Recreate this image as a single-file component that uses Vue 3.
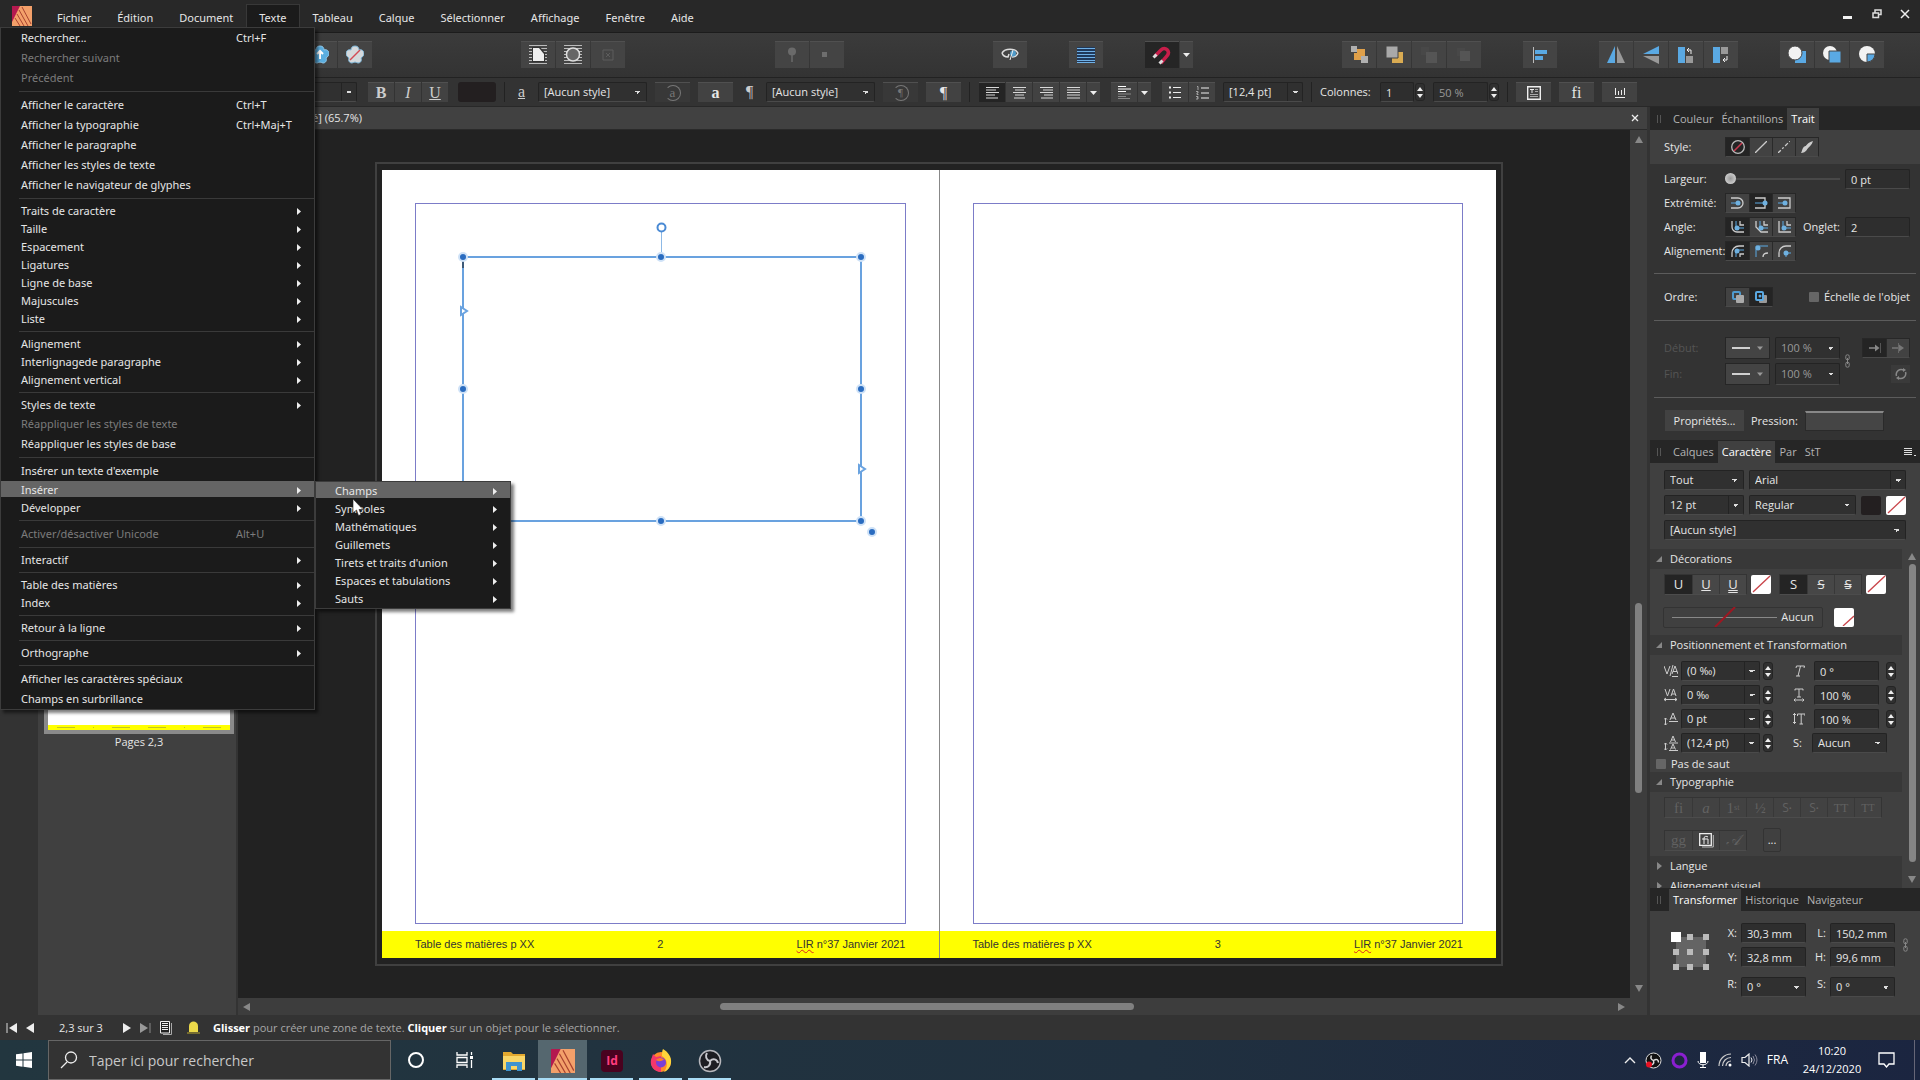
<template>
  <div class="app">
    <header class="menubar">
      <Icon name="logo" />
      <nav class="menus">
        <button v-for="m in menus" :key="m" class="menu-btn" :class="{ open: m === 'Texte' }">{{ m }}</button>
      </nav>
      <div class="win-btns">
        <button aria-label="Réduire"><Icon name="minimize" /></button>
        <button aria-label="Restaurer"><Icon name="restore" /></button>
        <button aria-label="Fermer"><Icon name="close" /></button>
      </div>
    </header>

    <div class="toolbar">
      <template v-for="(g, i) in toolGroups" :key="i">
        <span v-if="g.spread" class="stretch"></span>
        <div class="tool-group">
          <button v-for="b in g.items" :key="b" :class="{ narrow: b === 'caret', active: b === 'magnet' }" :aria-label="b">
            <Icon :name="b" />
          </button>
        </div>
      </template>
    </div>

    <div class="context">
      <select class="split font-field" aria-label="Police"><option>Arial</option></select>
      <div class="seg serif">
        <button><b>B</b></button>
        <button><i>I</i></button>
        <button><u>U</u></button>
      </div>
      <button class="ink" aria-label="Couleur du texte"></button>
      <span class="rule"></span>
      <span class="glyph under">a</span>
      <select class="style-field" aria-label="Style de caractère"><option>[Aucun style]</option></select>
      <button class="key dim"><span class="ring">a</span></button>
      <button class="key bold">a</button>
      <span class="glyph">¶</span>
      <select class="style-field" aria-label="Style de paragraphe"><option>[Aucun style]</option></select>
      <button class="key dim"><span class="ring small">¶</span></button>
      <button class="key">¶</button>
      <span class="rule"></span>
      <div class="seg aligns">
        <button class="on" aria-label="Gauche"><Icon name="alignLeft" /></button>
        <button aria-label="Centre"><Icon name="alignCenter" /></button>
        <button aria-label="Droite"><Icon name="alignRight" /></button>
        <button aria-label="Justifié"><Icon name="alignFull" /></button>
        <button class="narrow" aria-label="Plus"><Icon name="caret" /></button>
      </div>
      <div class="seg">
        <button aria-label="Alignement vertical"><Icon name="alignTop" /></button>
        <button class="narrow" aria-label="Plus"><Icon name="caret" /></button>
      </div>
      <div class="seg">
        <button aria-label="Puces"><Icon name="bullets" /></button>
        <button aria-label="Numéros"><Icon name="numbers" /></button>
      </div>
      <select class="split lead-field" aria-label="Interlignage"><option>[12,4 pt]</option></select>
      <span class="rule"></span>
      <label for="cols" class="cols-label">Colonnes:</label>
      <div class="stepper">
        <input id="cols" class="cols-field" value="1" />
        <button class="spin" aria-label="Colonnes +/-"><Icon name="spin" /></button>
      </div>
      <div class="stepper">
        <input class="gutter-field" value="50 %" disabled aria-label="Gouttière" />
        <button class="spin" aria-label="Gouttière +/-"><Icon name="spin" /></button>
      </div>
      <span class="rule"></span>
      <button class="key" aria-label="Cadre de texte"><Icon name="frameText" /></button>
      <button class="key">fi</button>
      <button class="key" aria-label="Ligne de base"><Icon name="baseline" /></button>
    </div>

    <main class="body">
      <section class="left">
        <div class="doc-tab">
          <span class="doc-name">é] (65.7%)</span>
          <button aria-label="Fermer le document"><Icon name="closeSmall" /></button>
        </div>
        <div class="work">
          <div class="tools"></div>
          <aside class="pages">
            <div class="thumb">
              <div class="thumb-foot"><i v-for="n in 6" :key="n"></i></div>
            </div>
            <span>Pages 2,3</span>
          </aside>
          <div class="view">
            <div class="view-row">
              <div class="canvas">
                <div class="spread">
                  <article v-for="p in [2, 3]" :key="p" class="page">
                    <div class="margins"></div>
                    <footer>
                      <span>Table des matières p XX</span>
                      <span>{{ p }}</span>
                      <span><em>LIR</em> n°37 Janvier 2021</span>
                    </footer>
                  </article>
                  <svg class="selection" width="520" height="390" viewBox="0 0 520 390">
                    <path d="M286.500 70V95" stroke="#8db9e6" />
                    <rect x="88" y="95" width="398" height="264" fill="none" stroke="#69a2df" stroke-width="2" />
                    <path d="M88 99v7" stroke="#111" />
                    <circle cx="286.500" cy="65.500" r="4" fill="#fff" stroke="#4a8ad4" stroke-width="2" />
                    <path v-for="t in [[86, 149], [484, 307]]" :key="t[0]" :d="`M${t[0]} ${t[1] - 4}v8l6-4z`" fill="#fff" stroke="#6aa3e0" stroke-width="2" />
                    <circle v-for="(h, i) in handles" :key="i" :cx="h[0]" :cy="h[1]" r="4" fill="#2a6cc0" stroke="#cfe2f7" stroke-width="2" />
                  </svg>
                </div>
              </div>
              <div class="vscroll">
                <Icon name="triUp" />
                <span class="vtrack"><span class="vthumb"></span></span>
                <Icon name="triDown" />
              </div>
            </div>
            <div class="hscroll">
              <Icon name="triLeft" />
              <span class="htrack"><span class="hthumb"></span></span>
              <Icon name="triRight" />
            </div>
          </div>
        </div>
      </section>

      <aside class="panels">
        <div class="tabs">
          <span class="grip"></span>
          <button>Couleur</button><button>Échantillons</button><button class="current">Trait</button>
        </div>
        <div class="stroke-panel">
          <div class="style-row line">
            <span class="lab">Style:</span>
            <div class="mini">
              <button class="on" aria-label="Aucun"><Icon name="none" /></button>
              <button aria-label="Plein"><Icon name="solid" /></button>
              <button aria-label="Tirets"><Icon name="dashed" /></button>
              <button aria-label="Pinceau"><Icon name="brush" /></button>
            </div>
          </div>
          <div class="rows">
            <div class="line">
              <label class="lab" for="width">Largeur:</label>
              <input type="range" value="0" class="slider" aria-label="Largeur du trait" />
              <input id="width" class="num push" value="0 pt" />
            </div>
            <div class="line">
              <span class="lab">Extrémité:</span>
              <div class="mini">
                <button aria-label="Ronde"><Icon name="capRound" /></button>
                <button class="on" aria-label="Plate"><Icon name="capButt" /></button>
                <button aria-label="Carrée"><Icon name="capSquare" /></button>
              </div>
            </div>
            <div class="line">
              <span class="lab">Angle:</span>
              <div class="mini">
                <button class="on" aria-label="Rond"><Icon name="joinRound" /></button>
                <button aria-label="Biseau"><Icon name="joinBevel" /></button>
                <button aria-label="Pointu"><Icon name="joinMiter" /></button>
              </div>
              <label class="push" for="miter">Onglet:</label>
              <input id="miter" class="num" value="2" />
            </div>
            <div class="line">
              <span class="lab">Alignement:</span>
              <div class="mini">
                <button class="on" aria-label="Centre"><Icon name="alCenter" /></button>
                <button aria-label="Intérieur"><Icon name="alIn" /></button>
                <button aria-label="Extérieur"><Icon name="alOut" /></button>
              </div>
            </div>
          </div>
          <hr />
          <div class="rows order">
            <div class="line">
              <span class="lab">Ordre:</span>
              <div class="mini">
                <button aria-label="Derrière"><Icon name="orderBack" /></button>
                <button class="on" aria-label="Devant"><Icon name="orderFront" /></button>
              </div>
              <label class="check push"><input type="checkbox" />Échelle de l'objet</label>
            </div>
          </div>
          <hr />
          <div class="rows ends">
            <div class="line">
              <span class="lab off">Début:</span>
              <button class="end-btn" aria-label="Début de ligne"><Icon name="endLine" /></button>
              <select class="end-size" aria-label="Taille début"><option>100 %</option></select>
              <Icon name="link" class="end-link" />
              <div class="mini push">
                <button class="on" aria-label="Dans la ligne"><Icon name="arrowA" /></button>
                <button aria-label="Hors de la ligne"><Icon name="arrowB" /></button>
              </div>
            </div>
            <div class="line">
              <span class="lab off">Fin:</span>
              <button class="end-btn" aria-label="Fin de ligne"><Icon name="endLine" /></button>
              <select class="end-size" aria-label="Taille fin"><option>100 %</option></select>
              <button class="swap push" aria-label="Permuter"><Icon name="swap" /></button>
            </div>
          </div>
          <hr />
          <div class="line pressure">
            <button class="props">Propriétés...</button>
            <span>Pression:</span>
            <button class="pressure-field" aria-label="Profil de pression"></button>
          </div>
        </div>

        <div class="tabs">
          <span class="grip"></span>
          <button>Calques</button><button class="current">Caractère</button><button>Par</button><button>StT</button>
          <button class="push burger" aria-label="Options"><Icon name="burger" /></button>
        </div>
        <div class="char-panel">
          <div class="char-top">
            <div class="line">
              <select class="w80" aria-label="Filtre"><option>Tout</option></select>
              <select class="split grow" aria-label="Famille"><option>Arial</option></select>
            </div>
            <div class="line">
              <select class="split w80" aria-label="Corps"><option>12 pt</option></select>
              <select class="grow" aria-label="Graisse"><option>Regular</option></select>
              <button class="swatch dark" aria-label="Couleur"></button>
              <button class="swatch" aria-label="Fond"><Icon name="noFill" /></button>
            </div>
            <div class="line">
              <select class="grow" aria-label="Style"><option>[Aucun style]</option></select>
            </div>
          </div>
          <div class="scroller">
            <div class="sections">
              <h3><Icon name="opened" />Décorations</h3>
              <div class="deco">
                <div class="seg2">
                  <button class="on">U</button>
                  <button><u>U</u></button>
                  <button><u class="double">U</u></button>
                </div>
                <button class="swatch" aria-label="Couleur soulignement"><Icon name="noFill" /></button>
                <div class="seg2 second">
                  <button class="on">S</button>
                  <button><s>S</s></button>
                  <button><s class="double">S</s></button>
                </div>
                <button class="swatch" aria-label="Couleur barré"><Icon name="noFill" /></button>
              </div>
              <div class="outline">
                <button class="outline-btn"><Icon name="noLine" />Aucun</button>
                <button class="swatch" aria-label="Couleur contour"><Icon name="halfFill" /></button>
              </div>
              <h3><Icon name="opened" />Positionnement et Transformation</h3>
              <div class="position">
                <div v-for="r in metrics" :key="r.icon" class="metric">
                  <Icon :name="r.icon" />
                  <select class="split" :aria-label="r.icon"><option>{{ r.value }}</option></select>
                  <button class="spin" aria-label="+/-"><Icon name="spin" /></button>
                  <span class="m-glyph"><Icon v-if="r.icon2" :name="r.icon2" /><span v-else>S:</span></span>
                  <input v-if="r.value2" :value="r.value2" :aria-label="r.icon2" />
                  <select v-else class="wide" aria-label="Position"><option>Aucun</option></select>
                  <button v-if="r.value2" class="spin push" aria-label="+/-"><Icon name="spin" /></button>
                </div>
              </div>
              <label class="check nobreak"><input type="checkbox" />Pas de saut</label>
              <h3><Icon name="opened" />Typographie</h3>
              <div class="typo">
                <div class="seg2 faded">
                  <button>fi</button>
                  <button><i>a</i></button>
                  <button>1<sup>st</sup></button>
                  <button>½</button>
                  <button class="sans">S<sup>•</sup></button>
                  <button class="sans">S<sub>•</sub></button>
                  <button class="caps">TT</button>
                  <button class="caps">T<small>T</small></button>
                </div>
                <div class="line">
                  <div class="seg2 faded">
                    <button>gg</button>
                    <button aria-label="Alternatives"><Icon name="alternates" /></button>
                    <button><i>𝒜</i></button>
                  </div>
                  <button class="more">...</button>
                </div>
              </div>
              <h3><Icon name="closed" />Langue</h3>
              <h3><Icon name="closed" />Alignement visuel</h3>
            </div>
            <div class="pscroll">
              <Icon name="triUp" />
              <span></span>
              <Icon name="triDown" />
            </div>
          </div>
        </div>

        <div class="tabs">
          <span class="grip"></span>
          <button class="current">Transformer</button><button>Historique</button><button>Navigateur</button>
        </div>
        <div class="transform">
          <Icon name="anchor" />
          <div class="fields">
            <template v-for="f in transform" :key="f[0]">
              <label :for="'t' + f[0]">{{ f[0] }}:</label>
              <input v-if="!f[2]" :id="'t' + f[0]" :value="f[1]" />
              <select v-else :id="'t' + f[0]"><option>{{ f[1] }}</option></select>
            </template>
          </div>
          <Icon name="link" />
        </div>
      </aside>
    </main>

    <footer class="status">
      <button aria-label="Première"><Icon name="first" /></button>
      <button aria-label="Précédente"><Icon name="prev" /></button>
      <span class="count">2,3 sur 3</span>
      <button aria-label="Suivante"><Icon name="next" /></button>
      <button aria-label="Dernière"><Icon name="last" /></button>
      <button aria-label="Pages"><Icon name="pagesIcon" /></button>
      <Icon name="bell" class="bell" />
      <p><b>Glisser</b> pour créer une zone de texte. <b>Cliquer</b> sur un objet pour le sélectionner.</p>
    </footer>

    <footer class="taskbar">
      <button class="start" aria-label="Démarrer"><Icon name="windows" /></button>
      <label class="search">
        <Icon name="search" />
        <input placeholder="Taper ici pour rechercher" />
      </label>
      <button v-for="t in tasks" :key="t.icon" class="task" :class="{ running: t.run, focus: t.focus }" :aria-label="t.icon">
        <Icon :name="t.icon" />
      </button>
      <div class="tray">
        <Icon v-for="t in ['chevron', 'obsSmall', 'ring', 'mic', 'wifi', 'sound']" :key="t" :name="t" />
        <span class="lang">FRA</span>
        <time>10:20<br />24/12/2020</time>
        <Icon name="notif" />
      </div>
    </footer>

    <!-- Menu Texte ouvert -->
    <div class="dropdown text-menu">
      <template v-for="(it, i) in textMenu" :key="i">
        <hr v-if="it === '-'" />
        <button v-else :class="{ sub: it.sub, off: it.off, hover: it.hover }">
          <span>{{ it.t }}</span>
          <kbd v-if="it.k">{{ it.k }}</kbd>
          <Icon v-if="it.sub" name="subArrow" />
        </button>
      </template>
    </div>
    <div class="dropdown insert-menu">
      <button v-for="(t, i) in insertMenu" :key="t" class="sub" :class="{ hover: i === 0 }">
        <span>{{ t }}</span>
        <Icon name="subArrow" />
      </button>
    </div>
    <Icon name="cursor" class="cursor" />
  </div>
</template>

<script setup>
import { h } from 'vue';

const menus = ['Fichier', 'Édition', 'Document', 'Texte', 'Tableau', 'Calque', 'Sélectionner', 'Affichage', 'Fenêtre', 'Aide'];

const toolGroups = [
  { items: ['flowerUp', 'flowerOff'] },
  { spread: true, items: ['wrapShape', 'wrapCircle', 'wrapOff'] },
  { spread: true, items: ['pin', 'dot'] },
  { spread: true, items: ['eye'] },
  { items: ['lines'] },
  { items: ['magnet', 'caret'] },
  { spread: true, items: ['toBack', 'backOne', 'frontOne', 'toFront'] },
  { items: ['alignTool'] },
  { items: ['flipH', 'flipV', 'rotL', 'rotR'] },
  { items: ['insBehind', 'insTop', 'insIn'] }
];

const handles = [[88, 95], [286, 95], [486, 95], [88, 227], [486, 227], [286, 359], [486, 359], [497, 370]];

const s = (t, o) => ({ t, sub: true, ...o });
const textMenu = [
  { t: 'Rechercher...', k: 'Ctrl+F' },
  { t: 'Rechercher suivant', off: true },
  { t: 'Précédent', off: true },
  '-',
  { t: 'Afficher le caractère', k: 'Ctrl+T' },
  { t: 'Afficher la typographie', k: 'Ctrl+Maj+T' },
  { t: 'Afficher le paragraphe' },
  { t: 'Afficher les styles de texte' },
  { t: 'Afficher le navigateur de glyphes' },
  '-',
  s('Traits de caractère'), s('Taille'), s('Espacement'), s('Ligatures'), s('Ligne de base'), s('Majuscules'), s('Liste'),
  '-',
  s('Alignement'), s('Interlignagede paragraphe'), s('Alignement vertical'),
  '-',
  s('Styles de texte'),
  { t: 'Réappliquer les styles de texte', off: true },
  { t: 'Réappliquer les styles de base' },
  '-',
  { t: "Insérer un texte d'exemple" },
  s('Insérer', { hover: true }),
  s('Développer'),
  '-',
  { t: 'Activer/désactiver Unicode', k: 'Alt+U', off: true },
  '-',
  s('Interactif'),
  '-',
  s('Table des matières'), s('Index'),
  '-',
  s('Retour à la ligne'),
  '-',
  s('Orthographe'),
  '-',
  { t: 'Afficher les caractères spéciaux' },
  { t: 'Champs en surbrillance' }
];
const insertMenu = ['Champs', 'Symboles', 'Mathématiques', 'Guillemets', "Tirets et traits d'union", 'Espaces et tabulations', 'Sauts'];

const metrics = [
  { icon: 'kern', value: '(0 ‰)', icon2: 'shear', value2: '0 °' },
  { icon: 'track', value: '0 ‰', icon2: 'scaleH', value2: '100 %' },
  { icon: 'shift', value: '0 pt', icon2: 'scaleV', value2: '100 %' },
  { icon: 'leading', value: '(12,4 pt)' }
];

const transform = [
  ['X', '30,3 mm'], ['L', '150,2 mm'],
  ['Y', '32,8 mm'], ['H', '99,6 mm'],
  ['R', '0 °', true], ['S', '0 °', true]
];

const tasks = [
  { icon: 'cortana' },
  { icon: 'taskview' },
  { icon: 'explorer', run: true },
  { icon: 'publisher', run: true, focus: true },
  { icon: 'indesign', run: true },
  { icon: 'firefox', run: true },
  { icon: 'obs', run: true }
];

// lignes horizontales d'une icône : [x1, x2, y]
const bars = (list, c = '#d8d8d8', w = 1) =>
  `<path stroke="${c}" stroke-width="${w}" d="${list.map(([a, b, y]) => `M${a} ${y}H${b}`).join('')}"/>`;
const wrapLines = bars([0, 3, 6, 9, 12, 15, 18].map((y) => [0, 18, y + 0.5]), '#bbb');
const flower = 'M9 1c3 0 4 2 4 4 3-1 5 1 5 4 0 2-2 3-3 4 1 2 0 5-3 5-1 0-2-1-3-1s-2 1-3 1c-3 0-4-3-3-5-1-1-3-2-3-4 0-3 2-5 5-4 0-2 1-4 4-4z';
const publisherArt = (w, hh) =>
  `<g transform="scale(${w / 20} ${hh / 20})"><rect width="20" height="20" fill="#f3a06a"/><path d="M0 0h8L0 16z" fill="#b3194f"/><path d="M7 4l9 16M5 8l7 12M3 12l5 8M10 1l9 17" stroke="#a8422f" stroke-width="1"/></g>`;
const node = (x, y) => `<circle cx="${x}" cy="${y}" r="2.5" fill="#6fb1e0"/>`;

const icons = {
  logo: [20, 20, publisherArt(20, 20)],
  minimize: [12, 12, '<path d="M1 9.5h9" stroke="#f2f2f2" stroke-width="3"/>'],
  restore: [10, 10, '<path d="M3 3.500V1h6v4.500H6.500M1 4h5.500v4.500H1z" fill="none" stroke="#ddd" stroke-width="1.500"/>'],
  close: [10, 10, '<path d="M1 1l8 8M9 1l-8 8" stroke="#eee" stroke-width="1.500"/>'],
  closeSmall: [8, 8, '<path d="M1 1l6 6M7 1l-6 6" stroke="#eee" stroke-width="1.300"/>'],
  flowerUp: [18, 19, `<path d="${flower}" fill="#5aaee0" stroke="#8fc9ec"/><path d="M9 14V6M6 9l3-3 3 3" stroke="#fff" stroke-width="2" fill="none"/>`],
  flowerOff: [18, 19, `<path d="${flower}" fill="#d5d9dc" stroke="#7fb9dc"/><path d="M4 15L14 5" stroke="#d34a55" stroke-width="1.500"/>`],
  wrapShape: [18, 19, wrapLines + '<path d="M3 2h8l5 6v9H3z" fill="#333"/><path d="M4 3h6l5 6v7H4z" fill="#eee"/>'],
  wrapCircle: [18, 19, wrapLines + '<circle cx="9" cy="9.500" r="6.500" fill="#666" stroke="#ddd" stroke-width="1.500"/>'],
  wrapOff: [12, 12, '<path d="M1 1h10v10H1zM4 4l4 4M8 4l-4 4" fill="none" stroke="#5c5c5c"/>'],
  pin: [10, 16, '<circle cx="5" cy="4.500" r="4" fill="#6a6a6a"/><path d="M5 8v7" stroke="#6a6a6a" stroke-width="1.500"/>'],
  dot: [10, 6, '<path d="M0 0h5v5H0z" fill="#6e6e6e"/>'],
  eye: [18, 14, '<path d="M1 5c3-5 13-5 16 0M1 5c1 3 3 4 6 4l1-3M17 5c-1 3-3 4-6 4" fill="none" stroke="#ddd" stroke-width="1.500"/><circle cx="12" cy="5.500" r="3" fill="#4f9bc9"/><path d="M12 2l-3 10" stroke="#eee"/>'],
  lines: [18, 16, '<path d="M0 0h18v16H0z" fill="#20395a"/>' + bars([1, 4, 7, 10, 13, 15].map((y) => [0, 18, y + 0.5]), '#6fb0e6')],
  magnet: [20, 20, '<path d="M3 11L9 5c4-4 10 1 6 6l-6 7" fill="none" stroke="#c81e4a" stroke-width="3.500"/><path d="M1.500 12.500l3-3M7.500 18.500l3-3" stroke="#ddd" stroke-width="3"/>'],
  caret: [7, 4, '<path d="M0 0h7L3.500 4z" fill="#eee"/>'],
  toBack: [17, 17, '<path d="M6 3h8v8h-3v3H3V7h3z" fill="#dfa04a"/><path d="M0 0h6v6H0zM10 10h7v7h-7z" fill="#b0b0b0"/>'],
  backOne: [17, 17, '<path d="M6 6h11v11H6z" fill="#d9ab52"/><path d="M0 0h12v12H0z" fill="#a9a9a9" stroke="#444"/>'],
  frontOne: [16, 16, '<path d="M0 0h8v8H0z" fill="#484848"/><path d="M5 5h11v11H5z" fill="#555"/>'],
  toFront: [14, 14, '<path d="M0 0h8v8H0z" fill="#484848"/><path d="M3 3h10v10H3z" fill="#555"/>'],
  alignTool: [15, 16, '<path d="M.5 0v16" stroke="#bbb"/><path d="M2 3h12v4H2zM2 9h8v4H2z" fill="#5aa9e3"/>'],
  flipH: [18, 17, '<path d="M8 0v17H0z" fill="#5aa9e3"/><path d="M10 0v17h8z" fill="#999"/>'],
  flipV: [16, 18, '<path d="M16 0v8H0z" fill="#5aa9e3"/><path d="M16 18v-8H0z" fill="#999"/>'],
  rotL: [16, 16, '<path d="M0 0h7v16H0z" fill="#5aa9e3"/><path d="M8 9h7v7H8z" fill="#999"/><path d="M9 3h4v4M11 1L9 3l2 2" fill="none" stroke="#eee"/>'],
  rotR: [16, 16, '<path d="M0 0h7v16H0z" fill="#5aa9e3"/><path d="M8 0h7v7H8z" fill="#999"/><path d="M14 9v4h-4M12 11l-2 2 2 2" fill="none" stroke="#eee"/>'],
  insBehind: [18, 17, '<path d="M7 5h11v12H7z" fill="#5aa9e3"/><circle cx="7" cy="7" r="7" fill="#f2f2f2" stroke="#444"/>'],
  insTop: [18, 17, '<circle cx="7" cy="7" r="7" fill="#f2f2f2"/><path d="M6 5h12v12H6z" fill="#5aa9e3" stroke="#444"/>'],
  insIn: [17, 17, '<circle cx="8" cy="8" r="8" fill="#f2f2f2"/><path d="M8 8h8a8 8 0 0 1-8 8z" fill="#5aa9e3" stroke="#444"/>'],
  alignLeft: [13, 12, bars([[0, 13, 0.5], [0, 10, 3], [0, 13, 5.5], [0, 9, 8], [0, 12, 11]])],
  alignCenter: [13, 12, bars([[0, 13, 0.5], [2, 11, 3], [0, 13, 5.5], [2, 11, 8], [1, 12, 11]])],
  alignRight: [13, 12, bars([[0, 13, 0.5], [3, 13, 3], [0, 13, 5.5], [4, 13, 8], [1, 13, 11]])],
  alignFull: [13, 12, bars([[0, 13, 0.5], [0, 13, 3], [0, 13, 5.5], [0, 13, 8], [0, 13, 11]])],
  alignTop: [13, 13, bars([[0, 8, 0.5], [0, 13, 3], [0, 8, 5.5]], '#fff') + bars([[0, 13, 8], [0, 8, 10.5], [0, 12, 12.5]], '#888')],
  bullets: [12, 13, bars([[4, 12, 1.5], [4, 12, 6.5], [4, 12, 11.5]], '#eee') + '<path d="M0 1.500h2M0 6.500h2M0 11.500h2" stroke="#eee" stroke-width="2"/>'],
  numbers: [13, 14, bars([[5, 13, 2], [5, 13, 7], [5, 13, 12]], '#eee') + '<path d="M1 .5h1V4M0 5.500h2v1.500H1v1.500h1.500M0 10.500h2V13H0M1 11.800h1" fill="none" stroke="#bbb" stroke-width=".8"/>'],
  spin: [6, 11, '<path d="M0 4h6L3 0zM0 7h6L3 11z" fill="#eee"/>'],
  frameText: [14, 14, '<path d="M.7.700h12.600v12.600H.7z" fill="none" stroke="#eee" stroke-width="1.400"/><path d="M3 3.500h4M5 3.500V7" stroke="#eee"/>' + bars([[8, 11, 3.5], [8, 11, 5.5], [3, 11, 8.5], [3, 11, 10.5]], '#aaa')],
  baseline: [10, 10, '<path d="M0 9.500h10M.5 0v7M3.500 3v4M6.500 2v5M9.500 0v7" stroke="#eee"/>'],
  triUp: [8, 8, '<path d="M0 7h8L4 0z" fill="#888"/>'],
  triDown: [8, 8, '<path d="M0 1h8L4 8z" fill="#888"/>'],
  triLeft: [8, 8, '<path d="M7 0v8L0 4z" fill="#888"/>'],
  triRight: [8, 8, '<path d="M1 0v8l7-4z" fill="#888"/>'],
  none: [14, 14, '<circle cx="7" cy="7" r="6.300" fill="none" stroke="#bbb" stroke-width="1.300"/><path d="M3 11l8-8" stroke="#c93a50" stroke-width="1.600"/>'],
  solid: [12, 12, '<path d="M0 12L12 0" stroke="#ccc" stroke-width="1.300"/>'],
  dashed: [12, 12, '<path d="M0 12L12 0" stroke="#ccc" stroke-width="1.300" stroke-dasharray="4 2 2 2"/>'],
  brush: [12, 12, '<path d="M12 0c-1 4-4 6-6 8l-2-2c2-3 4-5 8-6z" fill="#ccc"/><path d="M6 5c2 2-1 7-6 7 1-2 1-3 2-5 1-2 3-2 4-2z" fill="#ccc"/>'],
  capRound: [13, 12, '<path d="M0 1h7a5 5 0 0 1 0 10H0" fill="none" stroke="#ccc" stroke-width="1.300"/><path d="M0 6h7" stroke="#5aa9e3"/>' + node(7, 6)],
  capButt: [13, 12, '<path d="M0 1h10v10H0" fill="none" stroke="#ccc" stroke-width="1.300"/><path d="M0 6h10" stroke="#5aa9e3"/>' + node(10, 6)],
  capSquare: [13, 12, '<path d="M0 1h12v10H0" fill="none" stroke="#ccc" stroke-width="1.300"/><path d="M0 6h7" stroke="#5aa9e3"/>' + node(7, 6)],
  joinRound: [13, 12, '<path d="M1 0v6a5 5 0 0 0 5 5h7M9 0v4h4" fill="none" stroke="#ccc" stroke-width="1.300"/><path d="M5 0v7h8" fill="none" stroke="#5aa9e3"/>' + node(6, 7)],
  joinBevel: [13, 12, '<path d="M1 0v6l5 5h7M9 0v4h4" fill="none" stroke="#ccc" stroke-width="1.300"/><path d="M5 0v7h8" fill="none" stroke="#5aa9e3"/>' + node(6, 7)],
  joinMiter: [13, 12, '<path d="M1 0v11h12M9 0v4h4" fill="none" stroke="#ccc" stroke-width="1.300"/><path d="M5 0v7h8" fill="none" stroke="#5aa9e3"/>' + node(6, 7)],
  alCenter: [13, 12, '<path d="M1 12V8c0-4 3-7 7-7h5M9 12V9h4" fill="none" stroke="#ccc" stroke-width="1.300"/><path d="M5 12V5h8" fill="none" stroke="#5aa9e3"/>' + node(6, 6)],
  alIn: [13, 12, '<path d="M8 12c0-3 2-4 5-4" fill="none" stroke="#ccc" stroke-width="1.300"/><path d="M1 12V1h12" fill="none" stroke="#5aa9e3"/>' + node(3, 3)],
  alOut: [13, 12, '<path d="M1 12V8c0-4 3-7 7-7h5" fill="none" stroke="#ccc" stroke-width="1.300"/><path d="M8 12V8h5" fill="none" stroke="#5aa9e3"/>' + node(8, 8)],
  orderBack: [12, 12, '<rect x="1" y="1" width="7" height="7" rx="1" fill="none" stroke="#4f9bcf" stroke-width="2"/><rect x="4" y="4" width="8" height="8" rx="1" fill="#aaa"/>'],
  orderFront: [12, 12, '<rect x="4" y="4" width="8" height="8" rx="1" fill="#999"/><rect x="1" y="1" width="7" height="8" rx="1" fill="#222" stroke="#5aa9e3" stroke-width="2"/><circle cx="5" cy="5" r="1.500" fill="#5aa9e3"/>'],
  endLine: [32, 6, '<path d="M0 3h18" stroke="#fff" stroke-width="1.500"/><path d="M25 1.500h6L28 5z" fill="#999"/>'],
  link: [5, 14, '<rect x=".8" y=".8" width="3.400" height="5" rx="1.500" fill="none" stroke="#888"/><rect x=".8" y="8.200" width="3.400" height="5" rx="1.500" fill="none" stroke="#888"/><path d="M2.500 4v6" stroke="#888"/>'],
  arrowA: [12, 10, '<path d="M0 5h6" stroke="#888" stroke-width="1.500"/><path d="M6 1.500v7L10.500 5z" fill="#888"/><path d="M11.500 0v10" stroke="#555"/>'],
  arrowB: [12, 10, '<path d="M0 5h7" stroke="#777" stroke-width="1.500"/><path d="M7 1.500v7L12 5z" fill="#777"/><path d="M6.500 0v10" stroke="#666"/>'],
  swap: [12, 12, '<path d="M1.500 8a5 5 0 0 1 7-6M10.500 4a5 5 0 0 1-7 6" fill="none" stroke="#888" stroke-width="1.500"/><path d="M8 0l3 2-3 2zM4 8L1 10l3 2z" fill="#888"/>'],
  burger: [12, 9, bars([[0, 8, 0.5], [0, 8, 2.5], [0, 8, 4.5], [0, 8, 6.5]], '#ddd') + '<path d="M10 7h2v1h-2z" fill="#ddd"/>'],
  noFill: [19, 18, '<path d="M1 17L18 1" stroke="#c9444a" stroke-width="1.300"/>'],
  halfFill: [19, 18, '<path d="M8 18L19 8" stroke="#c9444a" stroke-width="1.300"/>'],
  noLine: [105, 20, '<path d="M0 10.500h105" stroke="#888"/><path d="M43 20L63 0" stroke="#9c1722" stroke-width="2"/>'],
  opened: [6, 6, '<path d="M6 0v6H0z" fill="#888"/>'],
  closed: [6, 8, '<path d="M1 0v8l5-4z" fill="#888"/>'],
  kern: [14, 14, '<path d="M0 2l3 8 3-8M6 12l3-11M8 10l3-8 3 8M9 7.500h4M8 12.500h6" fill="none" stroke="#ccc"/>'],
  track: [14, 14, '<path d="M1 1l2.500 7L6 1M7 8l2.500-7L12 8M8 6h3M0 11.500h13M2 10l-2 1.500 2 1.500M11 10l2 1.500-2 1.500" fill="none" stroke="#ccc"/>'],
  shift: [14, 14, '<path d="M6 8l3-7 3 7M7 6h4M5 9.500h9M1.500 6v7M0 7.500L1.500 6 3 7.500M0 11.500L1.500 13 3 11.500" fill="none" stroke="#ccc"/>'],
  leading: [14, 15, '<path d="M6.500 6L9 0l2.500 6M7.500 4h3M5 7h9M6.500 13.500L9 8l2.500 5.500M7.500 12h3M5 14.500h9M1.500 7v7M0 8.500L1.500 7 3 8.500M0 12.500L1.500 14 3 12.500" fill="none" stroke="#ccc"/>'],
  shear: [12, 12, '<path d="M3 3l.5-2h8L11 3M7.500 1L5 11M3 11h4" fill="none" stroke="#ccc"/>'],
  scaleH: [12, 14, '<path d="M2 2.500V1h8v1.500M6 1v8M4 9h4M1 12h10M2.500 10.500L1 12l1.500 1.500M9.500 10.500L11 12l-1.500 1.500" fill="none" stroke="#ccc"/>'],
  scaleV: [12, 12, '<path d="M4.500 3V1H12v2M8.200 1v10M6.500 11H10M1.500 0v11M0 2L1.500.5 3 2M0 9l1.500 1.500L3 9" fill="none" stroke="#ccc"/>'],
  alternates: [15, 15, '<path d="M.7.700h11.600v11.600H.7z" fill="none" stroke="#eee" stroke-width="1.300"/><path d="M3 14h11.300V2" fill="none" stroke="#bbb"/><path d="M5 11V5c0-2 3-2 4-1M3 6h6v5" fill="none" stroke="#eee"/>'],
  anchor: [39, 39, '<path d="M5 5h30v30H5z" fill="#646464"/><path d="M16 2h6v6h-6zM32 2h6v6h-6zM2 17h6v6H2zM16 17h6v6h-6zM32 17h6v6h-6zM2 32h6v6H2zM16 32h6v6h-6zM32 32h6v6h-6z" fill="#bbb"/><path d="M0 0h10v10H0z" fill="#fff"/>'],
  first: [11, 10, '<path d="M1 0v10" stroke="#ddd"/><path d="M11 0v10L3 5z" fill="#eee"/>'],
  prev: [8, 10, '<path d="M8 0v10L0 5z" fill="#eee"/>'],
  next: [8, 10, '<path d="M0 0v10l8-5z" fill="#eee"/>'],
  last: [11, 10, '<path d="M10 0v10" stroke="#888"/><path d="M0 0v10l8-5z" fill="#999"/>'],
  pagesIcon: [12, 14, '<path d="M3 13.500h8.500V2" fill="none" stroke="#aaa"/><path d="M.5.500h9v11.500h-9z" fill="#222" stroke="#eee"/>' + bars([[2, 8, 2.5], [2, 8, 4.5], [2, 8, 6.5], [2, 8, 8.5]], '#eee')],
  bell: [14, 13, '<path d="M2 11V5c0-6 9-6 9 0v6z" fill="#ecd94a"/><path d="M0 12h13" stroke="#8d8030" stroke-width="1.500"/>'],
  windows: [16, 16, '<path d="M0 2.300L6.500 1.400v6.200H0zM7.500 1.200L16 0v7.600H7.500zM0 8.500h6.500v6.200L0 13.800zM7.500 8.500H16V16l-8.500-1.200z" fill="#fff"/>'],
  search: [18, 18, '<circle cx="11" cy="6.500" r="5.500" fill="none" stroke="#eee" stroke-width="1.300"/><path d="M7 11l-6 6" stroke="#eee" stroke-width="1.300"/>'],
  cortana: [18, 18, '<circle cx="9" cy="9" r="7" fill="none" stroke="#fff" stroke-width="2"/>'],
  taskview: [18, 16, '<path d="M1 0v3h10V0M1 16v-3h10v3M1 5.500h10v5H1zM15.500 0v3M15.500 8v8" fill="none" stroke="#fff" stroke-width="1.300"/><path d="M14 4h3v3h-3z" fill="#fff"/>'],
  explorer: [22, 20, '<path d="M0 1h8l2 2h12v16H0z" fill="#e3a92f"/><path d="M0 5h22v13H0z" fill="#f9d667"/><path d="M3 20v-9h16v9h-5v-5H8v5z" fill="#3f93cf"/>'],
  publisher: [24, 24, publisherArt(24, 24)],
  indesign: [22, 22, '<rect width="22" height="22" rx="4" fill="#49021f"/><text x="11" y="15" text-anchor="middle" font-size="12" font-weight="700" font-family="Open Sans, sans-serif" fill="#ff3d7f">Id</text>'],
  firefox: [24, 24, '<circle cx="12" cy="13" r="10" fill="#ff8a2b"/><path d="M12 23A10 10 0 0 1 2 11l2-6 3 3 5-1z" fill="#f5376b"/><path d="M14 0c5 3 9 8 8 14-1 5-4 8-7 9 5-7 3-13-2-16 0-3 0-5 1-7z" fill="#ffd43a"/><circle cx="12" cy="13.500" r="5" fill="#7a3fd8"/><path d="M7 11c3-3 7-2 8 0-3 0-3 3-8 0z" fill="#ff7a2b"/>'],
  obs: [24, 24, '<circle cx="12" cy="12" r="10.500" fill="#1d1d22" stroke="#b8b8bd" stroke-width="1.500"/><path d="M12 12c-4-1-5-5-3-8M12 12c3-3 7-2 8 2M12 12c1 4-2 7-6 6" fill="none" stroke="#c8c8cd" stroke-width="2"/>'],
  chevron: [12, 8, '<path d="M1 7l5-5 5 5" fill="none" stroke="#eee" stroke-width="1.400"/>'],
  obsSmall: [17, 17, '<circle cx="8.500" cy="8.500" r="7.500" fill="#111" stroke="#ddd"/><path d="M8.500 8.500c-3-1-3-3-2-5M8.500 8.500c3-2 5-1 5 2M8.500 8.500c1 3-1 5-4 4" fill="none" stroke="#ddd" stroke-width="1.500"/><circle cx="4" cy="12.500" r="3" fill="#e81123"/>'],
  ring: [17, 17, '<circle cx="8.500" cy="8.500" r="6.500" fill="none" stroke="#8a1fd0" stroke-width="3"/>'],
  mic: [12, 16, '<path d="M3 0h6v11H3z" fill="#fff"/><path d="M1 9c0 5 10 5 10 0M6 13v3M3 15.500h6" fill="none" stroke="#fff"/>'],
  wifi: [14, 14, '<path d="M1 13A12 12 0 0 1 13 1M4.500 13A8.500 8.500 0 0 1 13 4.500M8 13a5 5 0 0 1 5-5" fill="none" stroke="#ccc" stroke-width="1.200"/><circle cx="12" cy="12" r="1.500" fill="#fff"/>'],
  sound: [17, 14, '<path d="M1 4.500h3L8 1v12L4 9.500H1z" fill="none" stroke="#eee" stroke-width="1.200"/><path d="M10 4.500q2 2.500 0 5" fill="none" stroke="#eee"/><path d="M12 3q3 4 0 8M14 1.500q4 5.500 0 11" fill="none" stroke="#889"/>'],
  notif: [17, 16, '<path d="M1 1h15v11h-5l-2.500 3L6 12H1z" fill="none" stroke="#fff" stroke-width="1.300"/>'],
  subArrow: [4, 7, '<path d="M0 0v7l4-3.500z" fill="#eee"/>'],
  cursor: [12, 19, '<path d="M1 1v14l3.500-3 2 5.500 2.500-1-2-5H11z" fill="#fff" stroke="#222" stroke-width=".6"/>']
};

const Icon = ({ name }) => {
  const [w, hh, body] = icons[name];
  return h('svg', { width: w, height: hh, viewBox: `0 0 ${w} ${hh}`, innerHTML: body, 'aria-hidden': true });
};
Icon.props = ['name'];
</script>

<style>
body {
  background: #333;
}
</style>

<style scoped>
.app {
  position: relative;
  display: flex;
  flex-direction: column;
  min-height: 100vh;
  overflow: hidden;
  background: #333;
  color: #e6e6e6;
  font: 11px/16px "Open Sans", "Noto Sans", sans-serif;
}

*, *::before, *::after {
  box-sizing: border-box;
}

button, input, select {
  margin: 0;
  padding: 0;
  border: 0;
  background: none;
  color: inherit;
  font: inherit;
}

button {
  display: flex;
  align-items: center;
  justify-content: center;
  flex: none;
  white-space: nowrap;
}

svg {
  display: block;
  flex: none;
}

.push {
  margin-left: auto;
}

.grow {
  flex: 1;
  min-width: 0;
}

/* Barre de menus */
.menubar {
  display: flex;
  align-items: center;
  height: 33px;
  padding-left: 12px;
  background: #282828;
  border-bottom: 1px solid #1c1c1c;
}

.menus, .dropdown {
  font-family: "Noto Sans", "Open Sans", sans-serif;
}

.menus {
  display: flex;
  align-self: stretch;
  margin-left: 12px;
  padding-top: 4px;
}

.menu-btn {
  padding: 0 12px;
  border: 1px solid transparent;
}

.menu-btn.open {
  background: #1b1b1b;
  border-color: #383838;
}

.win-btns {
  display: flex;
  gap: 18px;
  margin-left: auto;
  padding: 0 10px 4px 0;
}

/* Barre d'outils */
.toolbar {
  display: flex;
  align-items: center;
  height: 45px;
  gap: 42px;
  padding: 0 36px 2px 303px;
  background: linear-gradient(#3b3b3b, #333);
  border-bottom: 1px solid #222;
}

.stretch {
  flex: 1;
  margin: 0 -42px;
}

.tool-group {
  display: flex;
  gap: 1px;
}

.tool-group button {
  width: 34px;
  height: 27px;
  background: #444;
  border-top: 1px solid #505050;
}

.tool-group .active {
  background: #252525;
}

.tool-group .narrow {
  width: 13px;
}

/* Barre contextuelle */
.context {
  display: flex;
  align-items: center;
  height: 29px;
  gap: 8px;
  padding-left: 240px;
  background: #333;
  border-bottom: 1px solid #282828;
}

select {
  height: 20px;
  padding: 0 16px 0 5px;
  appearance: none;
  color: #e6e6e6;
  border: 1px solid #232323;
  border-bottom-color: #4a4a4a;
  border-radius: 2px;
  background:
    linear-gradient(45deg, transparent 50%, #ddd 50%) right 8px center / 3px 3px no-repeat,
    linear-gradient(-45deg, transparent 50%, #ddd 50%) right 5px center / 3px 3px no-repeat,
    #303030;
}

select.split {
  background:
    linear-gradient(45deg, transparent 50%, #ddd 50%) right 7px center / 3px 3px no-repeat,
    linear-gradient(-45deg, transparent 50%, #ddd 50%) right 4px center / 3px 3px no-repeat,
    linear-gradient(#232323, #232323) right 14px center / 1px 100% no-repeat,
    #303030;
}

input:not([type]) {
  height: 20px;
  padding: 0 5px;
  border: 1px solid #232323;
  border-bottom-color: #4a4a4a;
  border-radius: 2px;
  background: #2e2e2e;
}

input:disabled {
  color: #999;
}

.font-field {
  width: 117px;
}

.seg {
  display: flex;
  gap: 1px;
  margin-left: 3px;
}

.seg.aligns {
  margin-left: 1px;
}

.seg button, .key {
  width: 26px;
  height: 20px;
  background: #424242;
  border-top: 1px solid #505050;
}

.seg button.narrow {
  width: 13px;
}

.seg button.on, .mini button.on, .seg2 button.on {
  background: #242424;
}

.serif, .key, .glyph {
  font: 16px/18px "Liberation Serif", serif;
  color: #ccc;
}

.ink {
  width: 38px;
  height: 20px;
  margin-left: 2px;
  border-radius: 3px;
  background: #231f20;
}

.rule {
  width: 1px;
  height: 20px;
  background: #222;
}

.glyph {
  width: 17px;
  text-align: center;
}

.under {
  text-decoration: underline;
}

.style-field {
  width: 109px;
}

.key {
  width: 35px;
  color: #e6e6e6;
}

.key.bold {
  font-weight: 700;
}

.key.dim {
  background: #383838;
  color: #777;
}

.ring {
  width: 16px;
  height: 16px;
  border: 1px solid #777;
  border-left-color: transparent;
  border-radius: 50%;
  font-size: 13px;
  line-height: 13px;
}

.ring.small {
  font-size: 11px;
}

.lead-field {
  width: 80px;
}

.cols-label {
  width: 52px;
  white-space: nowrap;
}

.stepper {
  display: flex;
  gap: 1px;
}

.cols-field {
  width: 34px;
}

.gutter-field {
  width: 55px;
}

.spin {
  width: 10px;
  height: 18px;
  align-self: center;
  border: 1px solid #242424;
  border-radius: 3px;
  background: #303030;
}

/* Zone principale */
.body {
  display: flex;
  flex: 1;
  min-height: 0;
}

.left {
  display: flex;
  flex: 1;
  flex-direction: column;
  min-width: 0;
  margin-right: 3px;
}

.doc-tab {
  display: flex;
  align-items: center;
  justify-content: space-between;
  height: 23px;
  padding-right: 8px;
  background: #414141;
  border-bottom: 1px solid #2a2a2a;
}

.doc-name {
  width: 362px;
  text-align: right;
}

.work {
  display: flex;
  flex: 1;
}

.tools {
  width: 38px;
}

.pages {
  display: flex;
  flex-direction: column;
  align-items: center;
  width: 200px;
  padding: 466px 0 0 4px;
  background: #404040;
  border-right: 2px solid #333;
}

.thumb {
  display: flex;
  align-items: flex-end;
  width: 190px;
  height: 138px;
  border: 4px solid #8a8a8a;
  background: #fff;
}

.thumb-foot {
  display: flex;
  align-items: center;
  justify-content: space-around;
  width: 100%;
  height: 5px;
  background: #ff0;
}

.thumb-foot i {
  width: 18px;
  height: 1px;
  background: #c4c422;
}

.thumb-foot i:nth-child(3n + 2) {
  width: 1px;
}

.view {
  display: flex;
  flex: 1;
  flex-direction: column;
}

.view-row {
  display: flex;
  flex: 1;
}

.canvas {
  display: flex;
  flex: 1;
  align-items: center;
  justify-content: center;
  padding-left: 10px;
  background: #222;
}

.spread {
  position: relative;
  display: flex;
  width: 1128px;
  height: 804px;
  padding: 6px 5px;
  border: 2px solid #404040;
}

.page {
  display: flex;
  flex: 1;
  flex-direction: column;
  background: #fff;
}

.page + .page {
  border-left: 1px solid #888;
}

.margins {
  flex: 1;
  margin: 33px 33px 7px;
  border: 1px solid #7c7cc8;
}

.page footer {
  display: grid;
  grid-template-columns: 1fr auto 1fr;
  align-items: center;
  height: 27px;
  padding: 0 33px 2px;
  background: #ff0;
  color: #333;
  font: 11px/14px "Liberation Sans", Arial, sans-serif;
}

.page footer span:last-child {
  text-align: right;
}

.page footer em {
  font-style: normal;
  text-decoration: underline wavy #d22 1px;
}

.selection {
  position: absolute;
  top: -2px;
  left: -2px;
}

.vscroll {
  display: flex;
  flex-direction: column;
  align-items: center;
  justify-content: space-between;
  width: 17px;
  padding: 6px 0;
  background: #3d3d3d;
}

.vtrack {
  flex: 1;
  padding-top: 459px;
}

.vthumb {
  display: block;
  width: 7px;
  height: 190px;
  border-radius: 4px;
  background: #808080;
}

.hscroll {
  display: flex;
  align-items: center;
  height: 17px;
  padding: 0 22px 0 5px;
  background: #3d3d3d;
}

.htrack {
  display: flex;
  flex: 1;
}

/* position horizontale de la vue */
.htrack::before {
  flex: 34;
  content: "";
}

.htrack::after {
  flex: 35;
  content: "";
}

.hthumb {
  flex: 30;
  height: 7px;
  border-radius: 4px;
  background: #808080;
}

/* Panneaux de droite */
.panels {
  display: flex;
  flex-direction: column;
  width: 270px;
  background: #404040;
}

.tabs {
  display: flex;
  align-items: stretch;
  flex: none;
  height: 23px;
  padding: 1px 4px 0 7px;
  background: #262626;
  color: #b4b4b4;
}

.tabs button {
  padding: 0 4px;
}

.tabs .current {
  background: #404040;
  color: #fff;
}

.grip {
  width: 4px;
  height: 8px;
  margin: 7px 8px 0 0;
  border: 1px solid #555;
  border-width: 0 1px;
}

.tabs .burger {
  padding: 0;
}

.stroke-panel {
  flex: none;
  height: 310px;
  background: #333;
}

.line {
  display: flex;
  align-items: center;
}

.lab {
  width: 61px;
  white-space: nowrap;
}

.lab.off {
  color: #555;
}

.style-row {
  height: 34px;
  padding-left: 14px;
  background: #404040;
}

.rows {
  display: grid;
  gap: 4px;
  padding: 5px 10px 12px 14px;
}

.rows .line {
  height: 20px;
}

.mini {
  display: flex;
  border: 1px solid #272727;
  border-bottom-color: #4a4a4a;
}

.mini button {
  width: 23px;
  height: 18px;
  background: #424242;
}

.mini button + button {
  border-left: 1px solid #2a2a2a;
}

.slider {
  width: 115px;
  height: 12px;
  appearance: none;
}

.slider::-webkit-slider-runnable-track {
  height: 2px;
  background: #484848;
}

.slider::-webkit-slider-thumb {
  width: 11px;
  height: 11px;
  margin-top: -5px;
  appearance: none;
  border-radius: 50%;
  background: radial-gradient(#999, #e0e0e0);
}

.num {
  width: 65px;
}

label.push {
  padding-right: 5px;
}

hr {
  height: 1px;
  margin: 0 4px;
  border: 0;
  background: #5c5c5c;
}

.order {
  padding: 13px 10px 13px 14px;
}

.check {
  display: flex;
  align-items: center;
  gap: 5px;
  white-space: nowrap;
}

.check.push {
  padding: 0;
}

.check input {
  width: 10px;
  height: 10px;
  appearance: none;
  background: #666;
  border-radius: 1px;
}

.ends {
  padding: 16px 10px 12px 14px;
}

.ends .line {
  height: 22px;
}

.end-btn {
  width: 45px;
  height: 22px;
  margin-right: 5px;
  border: 1px solid #262626;
  background: #444;
}

.end-size {
  width: 65px;
  height: 22px;
  margin-right: 5px;
  color: #999;
}

.end-link {
  align-self: flex-end;
  margin-bottom: -9px;
}

.swap {
  width: 19px;
  height: 18px;
  background: #3a3a3a;
}

.pressure {
  gap: 7px;
  padding: 12px 15px;
}

.props {
  width: 79px;
  height: 21px;
  background: #424242;
}

.pressure-field {
  width: 79px;
  height: 20px;
  border: 1px solid #2a2a2a;
  border-top: 2px solid #888;
  background: #454545;
}

.char-panel {
  display: flex;
  flex: 1;
  flex-direction: column;
  min-height: 0;
}

.char-top {
  display: grid;
  gap: 5px;
  padding: 7px 14px 9px;
}

.char-top .line {
  gap: 5px;
}

.w80 {
  width: 80px;
}

.swatch {
  width: 20px;
  height: 19px;
  border-radius: 2px;
  background: #fff;
}

.swatch.dark {
  background: #231f20;
}

.scroller {
  display: flex;
  flex: 1 0 338px;
  height: 338px;
  overflow: hidden;
}

.sections {
  width: 252px;
}

h3 {
  display: flex;
  align-items: center;
  height: 20px;
  margin: 0;
  padding-left: 6px;
  gap: 8px;
  background: #383838;
  font-size: 11px;
  font-weight: 400;
}

.deco {
  display: flex;
  align-items: center;
  height: 30px;
  padding-left: 14px;
  gap: 4px;
}

.seg2 {
  display: flex;
  border: 1px solid #343434;
  border-bottom-color: #4c4c4c;
}

.deco .second {
  margin-left: 4px;
}

.seg2 button {
  width: 27px;
  height: 19px;
  background: #474747;
  font-size: 13px;
}

.seg2 button + button {
  border-left: 1px solid #383838;
}

.double {
  text-decoration-style: double;
}

.outline {
  display: flex;
  align-items: center;
  height: 36px;
  padding-left: 13px;
  gap: 11px;
}

.outline-btn {
  width: 160px;
  height: 21px;
  gap: 4px;
  border: 1px solid #333;
  border-radius: 2px;
}

.position {
  display: grid;
  gap: 4px;
  padding: 6px 6px 3px 14px;
}

.metric {
  display: flex;
  align-items: center;
  height: 20px;
  gap: 3px;
}

.metric .split {
  width: 79px;
}

.m-glyph {
  display: flex;
  width: 27px;
  margin-left: 6px;
  padding-left: 11px;
}

.metric input {
  width: 65px;
  margin-left: 2px;
}

.metric .wide {
  width: 75px;
}

.nobreak {
  height: 16px;
  padding-left: 6px;
}

.typo {
  display: grid;
  gap: 10px;
  padding: 5px 0 4px 14px;
  justify-items: start;
}

.faded button {
  background: #424242;
  color: #616161;
  font: 15px/18px "Liberation Serif", serif;
}

.faded sup, .faded sub {
  font-size: 8px;
  line-height: 8px;
}

.faded .sans {
  font-family: "Open Sans", sans-serif;
  font-size: 12px;
}

.faded .caps {
  font-size: 12px;
}

.more {
  width: 18px;
  height: 24px;
  margin-left: 16px;
  border: 1px solid #333;
  border-radius: 2px;
}

.pscroll {
  display: flex;
  flex-direction: column;
  align-items: center;
  gap: 3px;
  width: 18px;
  padding: 4px 0 5px 2px;
  margin-left: auto;
}

.pscroll span {
  flex: 1;
  width: 7px;
  margin-bottom: 10px;
  border-radius: 4px;
  background: #858585;
}

.transform {
  display: flex;
  flex: none;
  align-items: flex-start;
  height: 104px;
  padding: 12px 12px 0 21px;
}

.transform > svg {
  margin-top: 9px;
}

.transform > svg:last-child {
  margin: 15px 0 0 8px;
}

.fields {
  display: grid;
  grid-template-columns: 31px 65px 24px 65px;
  align-items: center;
  row-gap: 4px;
  flex: 1;
}

.fields label {
  padding-right: 4px;
  text-align: right;
}

.fields select {
  margin-top: 6px;
}

.fields input, .fields select {
  width: 65px;
}

/* Barre d'état */
.status {
  display: flex;
  align-items: center;
  height: 25px;
  padding-left: 6px;
  background: #333;
}

.status button {
  margin-right: 9px;
}

.count {
  width: 80px;
  padding-left: 16px;
}

.bell {
  margin: 0 12px 0 6px;
}

.status p {
  margin: 0;
  color: #a8a8a8;
}

.status b {
  color: #fff;
}

/* Barre des tâches */
.taskbar {
  display: flex;
  height: 40px;
  background: linear-gradient(90deg, #22363f, #20303f 60%, #1b2540);
  color: #fff;
}

.start {
  width: 48px;
}

.search {
  display: flex;
  align-items: center;
  width: 343px;
  padding-left: 11px;
  gap: 11px;
  border: 1px solid #666;
  background: #333;
}

.taskbar .search input {
  flex: 1;
  height: 36px;
  padding: 0;
  border: 0;
  background: none;
  font-size: 14px;
}

.search input::placeholder {
  color: #c8c8c8;
}

.task {
  width: 49px;
  padding-top: 3px;
  border-bottom: 3px solid transparent;
  background-clip: padding-box;
}

.task.running {
  border-image: linear-gradient(90deg, transparent 4px, #a9dcf5 4px 45px, transparent 45px) 1;
  border-width: 0 0 2px;
}

.task.focus {
  background: #55676f;
  border-image: none;
  border-color: #a9dcf5;
}

.tray {
  display: flex;
  align-items: center;
  gap: 9px;
  margin: 0 5px 0 auto;
  padding-right: 19px;
  border-right: 1px solid #667;
}

.lang {
  font-size: 12px;
}

.tray time {
  width: 70px;
  font-size: 11px;
  line-height: 18px;
  text-align: center;
}

.tray svg:last-child {
  margin-left: 2px;
}

/* Menus déroulants */
.dropdown {
  position: absolute;
  border: 1px solid #3c3c3c;
  background: #1b1b1b;
  box-shadow: 3px 3px 3px rgba(0, 0, 0, 0.5);
}

.text-menu {
  top: 27px;
  left: 0;
  width: 315px;
}

.insert-menu {
  top: 481px;
  left: 315px;
  width: 196px;
}

.dropdown button {
  display: flex;
  justify-content: flex-start;
  width: 100%;
  height: 20px;
  padding: 0 13px 0 20px;
  text-align: left;
}

.insert-menu button {
  padding-left: 19px;
}

.dropdown .sub {
  height: 18px;
}

.dropdown .hover {
  background: linear-gradient(#656565 16px, transparent 16px);
}

.dropdown .off {
  color: #7c7c7c;
}

.dropdown span {
  width: 215px;
}

.insert-menu span {
  width: auto;
}

.dropdown svg {
  margin-left: auto;
}

.dropdown hr {
  margin: 3px 0 3px 18px;
  background: #3a3a3a;
}

kbd {
  font: inherit;
}

.cursor {
  position: absolute;
  top: 498px;
  left: 352px;
}
</style>
